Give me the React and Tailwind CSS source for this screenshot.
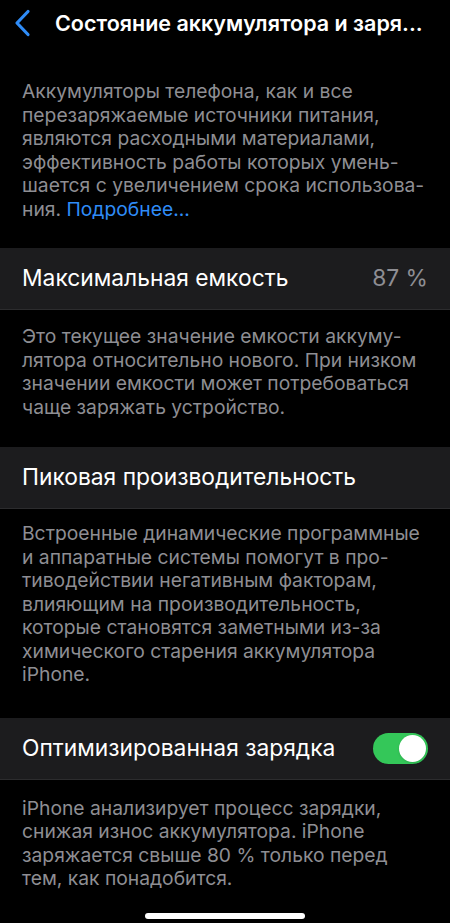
import React from "react";

const font = { fontFamily: "Inter, 'Noto Sans', sans-serif" };

function Lines({ lines, className = "" }) {
  return (
    <div className={"px-[22px] text-[19.3px] leading-[23.5px] text-[#8e8e93] " + className}>
      {lines.map((l, i) => (
        <div key={i} className="whitespace-nowrap">{l}</div>
      ))}
    </div>
  );
}

function Row({ children }) {
  return (
    <div className="flex h-[62px] items-center justify-between border-b border-[#2c2c2e] bg-[#1c1c1e] pl-[22px] pr-[22px]">
      {children}
    </div>
  );
}

export default function App() {
  return (
    <div className="min-h-[923px] w-[450px] bg-black text-white" style={font}>
      {/* navigation bar */}
      <div className="flex h-[46px] items-center">
        <svg className="ml-[14px] h-[28px] w-[17px]" viewBox="0 0 17 28" fill="none">
          <path d="M14 2.5 L3 14 L14 25.5" stroke="#2f8cf7" strokeWidth="3.2" strokeLinecap="round" strokeLinejoin="round" />
        </svg>
        <div className="ml-[24px] whitespace-nowrap text-[21.5px] font-semibold">
          Состояние аккумулятора и заря...
        </div>
      </div>

      <Lines
        className="mt-[34px]"
        lines={[
          "Аккумуляторы телефона, как и все",
          "перезаряжаемые источники питания,",
          "являются расходными материалами,",
          "эффективность работы которых умень-",
          "шается с увеличением срока использова-",
          <>ния. <span className="text-[#2f8cf7]">Подробнее...</span></>,
        ]}
      />

      <div className="mt-[27px]">
        <Row>
          <span className="text-[22.8px]">Максимальная емкость</span>
          <span className="text-[22.8px] text-[#8e8e93]">87 %</span>
        </Row>
      </div>

      <Lines
        className="mt-[15px]"
        lines={[
          "Это текущее значение емкости аккуму-",
          "лятора относительно нового. При низком",
          "значении емкости может потребоваться",
          "чаще заряжать устройство.",
        ]}
      />

      <div className="mt-[28px]">
        <Row>
          <span className="text-[22.8px]">Пиковая производительность</span>
        </Row>
      </div>

      <Lines
        className="mt-[13px]"
        lines={[
          "Встроенные динамические программные",
          "и аппаратные системы помогут в про-",
          "тиводействии негативным факторам,",
          "влияющим на производительность,",
          "которые становятся заметными из-за",
          "химического старения аккумулятора",
          "iPhone.",
        ]}
      />

      <div className="mt-[31px]">
        <Row>
          <span className="text-[22.8px]">Оптимизированная зарядка</span>
          <div className="flex h-[31px] w-[55px] items-center justify-end rounded-full bg-[#34c759] px-[2px]">
            <div className="h-[27px] w-[27px] rounded-full bg-white shadow" />
          </div>
        </Row>
      </div>

      <Lines
        className="mt-[17px]"
        lines={[
          "iPhone анализирует процесс зарядки,",
          "снижая износ аккумулятора. iPhone",
          "заряжается свыше 80 % только перед",
          "тем, как понадобится.",
        ]}
      />

      {/* home indicator */}
      <div className="mt-[22px] flex justify-center">
        <div className="h-[6px] w-[160px] rounded-full bg-white" />
      </div>
    </div>
  );
}
